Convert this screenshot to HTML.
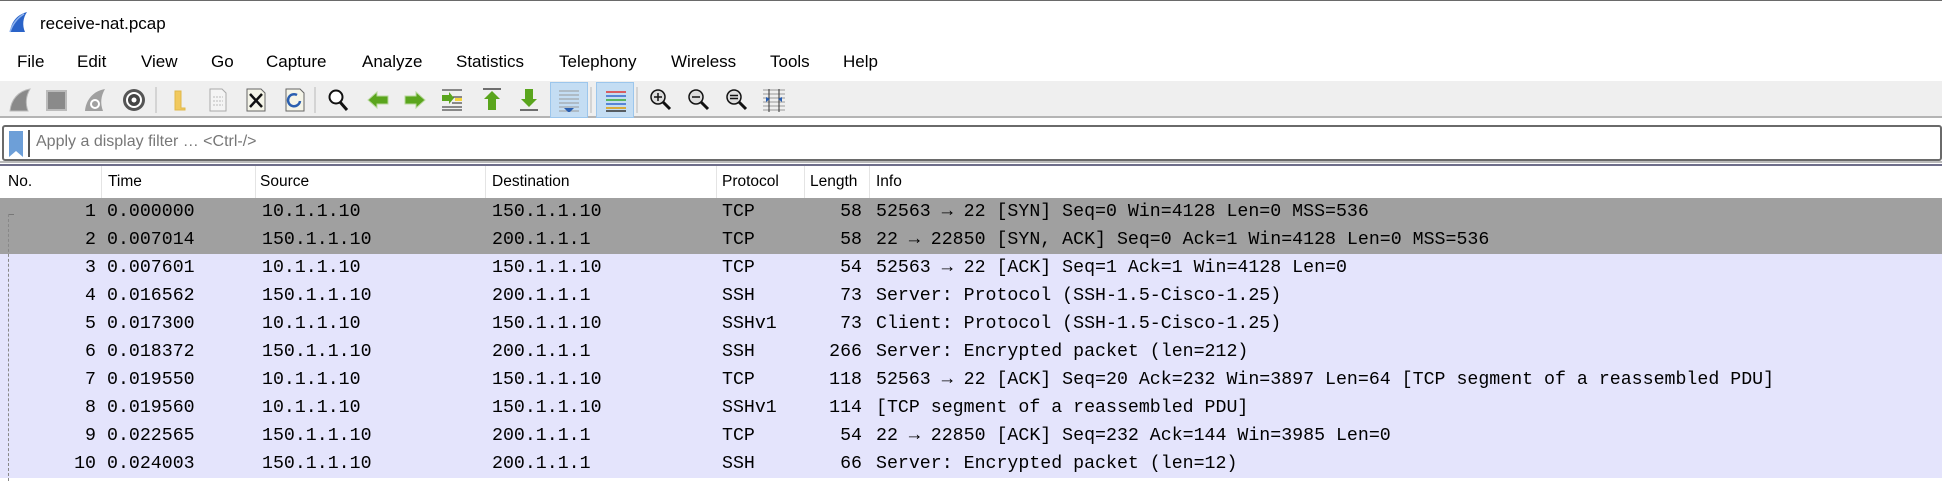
<!DOCTYPE html>
<html><head><meta charset="utf-8"><style>
*{margin:0;padding:0;box-sizing:border-box}
body{width:1942px;height:481px;overflow:hidden;background:#fff;position:relative;font-family:"Liberation Sans",sans-serif;color:#000}
.a{position:absolute}
.menu span{position:absolute;top:52px;font-size:17px}
.tb{position:absolute;top:81px;left:0;width:1942px;height:37px;background:#efefef;border-bottom:2px solid #b4b4b4}
.ic{position:absolute;top:7px;width:24px;height:24px}
.sep{position:absolute;top:6px;width:2px;height:26px;background:#d4d4d4}
.hl{position:absolute;top:1px;height:36px;width:38px;background:#c4ddf3;border:1px solid #9cc6ec}
.row{position:absolute;left:0;width:1942px;height:28px;font-family:"Liberation Mono",monospace;font-size:18.25px;line-height:28px;white-space:pre}
.row span{position:absolute;top:0}
.hd span{position:absolute;top:173px;font-size:15.5px}
.cs{position:absolute;top:166px;width:1px;height:32px;background:#e4e4e4}
</style></head><body>
<div class="a" style="left:0;top:0;width:1942px;height:1px;background:#6a6a6a"></div>
<svg class="a" style="left:8px;top:11px" width="20" height="22" viewBox="0 0 20 22"><path d="M2 21 C3 12 8 4 19 1 C15 7 14 14 17 21 Z" fill="#2a63c8"/><path d="M2 21 C4 14 9 7 16 3" stroke="#8fb3ee" stroke-width="1.5" fill="none"/></svg>
<div class="a" style="left:40px;top:14px;font-size:17px">receive-nat.pcap</div>
<div class="menu">
<span style="left:17px">File</span><span style="left:77px">Edit</span><span style="left:141px">View</span><span style="left:211px">Go</span><span style="left:266px">Capture</span><span style="left:362px">Analyze</span><span style="left:456px">Statistics</span><span style="left:559px">Telephony</span><span style="left:671px">Wireless</span><span style="left:770px">Tools</span><span style="left:843px">Help</span>
</div>
<div class="tb">
<svg class="ic" style="left:8px" viewBox="0 0 24 24"><path d="M2 23 C3 12 10 3 22 1 C18 8 17 15 20 23 Z" fill="#8a8a8a" stroke="#bbb"/></svg>
<div class="ic" style="left:46px;top:9px;width:21px;height:21px;background:#8a8a8a;border:2px solid #bbb"></div>
<svg class="ic" style="left:83px" viewBox="0 0 24 24"><path d="M2 23 C3 12 10 3 22 1 C18 8 17 15 20 23 Z" fill="#a0a0a0"/><circle cx="12" cy="16" r="4" fill="none" stroke="#fff" stroke-width="2"/></svg>
<svg class="ic" style="left:122px" viewBox="0 0 24 24"><circle cx="12" cy="12" r="11" fill="#555"/><circle cx="12" cy="12" r="8" fill="#fff"/><circle cx="12" cy="12" r="6" fill="#444"/><circle cx="12" cy="12" r="2.5" fill="#fff"/></svg>
<div class="sep" style="left:155px"></div>
<svg class="ic" style="left:170px" viewBox="0 0 24 24"><path d="M5 3 H11 V20 H15 V22 H5 Z" fill="#f1c95e" stroke="#e0b84a"/></svg>
<svg class="ic" style="left:206px" viewBox="0 0 24 24"><path d="M4 1 H16 L20 5 V23 H4 Z" fill="#f4f4f4" stroke="#aaa"/><path d="M7 9h10M7 13h10M7 17h10" stroke="#bbb" stroke-dasharray="2 1"/></svg>
<svg class="ic" style="left:244px" viewBox="0 0 24 24"><path d="M3 1 H17 L21 5 V23 H3 Z" fill="#f4f4e8" stroke="#666"/><path d="M6 6 L18 19 M18 6 L6 19" stroke="#111" stroke-width="2.5"/></svg>
<svg class="ic" style="left:283px" viewBox="0 0 24 24"><path d="M3 1 H17 L21 5 V23 H3 Z" fill="#f4f4e8" stroke="#666"/><path d="M14 7 A6 6 0 1 0 17 13" stroke="#2a5fb0" stroke-width="2.5" fill="none"/></svg>
<div class="sep" style="left:314px"></div>
<svg class="ic" style="left:326px" viewBox="0 0 24 24"><circle cx="10" cy="9" r="6.5" fill="#fff" stroke="#111" stroke-width="2"/><path d="M14 14 L21 22" stroke="#111" stroke-width="3"/></svg>
<svg class="ic" style="left:366px" viewBox="0 0 24 24"><path d="M2 12 L11 4 V8 H22 V16 H11 V20 Z" fill="#5aa51d" stroke="#b8d99c"/></svg>
<svg class="ic" style="left:403px" viewBox="0 0 24 24"><path d="M22 12 L13 4 V8 H2 V16 H13 V20 Z" fill="#5aa51d" stroke="#b8d99c"/></svg>
<svg class="ic" style="left:440px" viewBox="0 0 24 24"><path d="M2 2h20M2 19h20M2 22h20M12 9h10M12 15h10" stroke="#222"/><path d="M14 10 L9 4 V7 H2 V13 H9 V16 Z" fill="#5aa51d"/><rect x="15" y="10" width="7" height="3" fill="#f5d53b"/></svg>
<svg class="ic" style="left:480px" viewBox="0 0 24 24"><path d="M3 1h18" stroke="#444" stroke-width="1.5"/><path d="M12 3 L20 11 H16 V22 H8 V11 H4 Z" fill="#5aa51d"/></svg>
<svg class="ic" style="left:517px" viewBox="0 0 24 24"><path d="M3 22h18" stroke="#444" stroke-width="1.5"/><path d="M12 19 L20 11 H16 V1 H8 V11 H4 Z" fill="#5aa51d"/></svg>
<div class="hl" style="left:550px"></div>
<svg class="ic" style="left:557px" viewBox="0 0 24 24"><path d="M2 3h20M2 7h20M2 11h20M2 15h20M2 19h20M2 23h20" stroke="#999"/><path d="M7 20 H17 L12 25 Z" fill="#2a5fb0"/></svg>
<div class="sep" style="left:590px"></div>
<div class="hl" style="left:596px"></div>
<svg class="ic" style="left:604px" viewBox="0 0 24 24"><path d="M2 4h20" stroke="#d33" stroke-width="1.5"/><path d="M2 8h20" stroke="#36c" stroke-width="1.5"/><path d="M2 12h20" stroke="#3a3" stroke-width="1.5"/><path d="M2 16h20" stroke="#36c" stroke-width="1.5"/><path d="M2 20h20" stroke="#d90" stroke-width="1.5"/><path d="M2 23h20" stroke="#333" stroke-width="1.5"/></svg>
<div class="sep" style="left:636px"></div>
<svg class="ic" style="left:648px" viewBox="0 0 24 24"><circle cx="10" cy="9" r="7" fill="#ddd" stroke="#111" stroke-width="1.5"/><path d="M6 9h8M10 5v8" stroke="#111" stroke-width="1.5"/><path d="M15 14 L22 21" stroke="#111" stroke-width="3"/></svg>
<svg class="ic" style="left:686px" viewBox="0 0 24 24"><circle cx="10" cy="9" r="7" fill="#ddd" stroke="#111" stroke-width="1.5"/><path d="M6 9h8" stroke="#111" stroke-width="1.5"/><path d="M15 14 L22 21" stroke="#111" stroke-width="3"/></svg>
<svg class="ic" style="left:724px" viewBox="0 0 24 24"><circle cx="10" cy="9" r="7" fill="#ddd" stroke="#111" stroke-width="1.5"/><path d="M6 7.5h8M6 10.5h8" stroke="#111" stroke-width="1.5"/><path d="M15 14 L22 21" stroke="#111" stroke-width="3"/></svg>
<svg class="ic" style="left:762px" viewBox="0 0 24 24"><path d="M1 2h22M1 6h22M1 10h22M1 14h22M1 18h22M1 22h22" stroke="#999"/><path d="M7 1v23M17 1v23" stroke="#333"/><path d="M4 9 L8 11 L4 14Z M20 9 L16 11 L20 14Z" fill="#2a5fb0"/></svg>
</div>
<div class="a" style="left:2px;top:125px;width:1940px;height:36px;border:2px solid #6a6a6a;border-radius:3px;background:#fff"></div>
<svg class="a" style="left:9px;top:131px" width="14" height="26" viewBox="0 0 14 26"><path d="M0 0H14V26L7 20L0 26Z" fill="#6d9fd8"/></svg>
<div class="a" style="left:28px;top:130px;width:2px;height:27px;background:#555"></div>
<div class="a" style="left:36px;top:133px;font-size:16px;color:#777">Apply a display filter … &lt;Ctrl-/&gt;</div>
<div class="a" style="left:0;top:161px;width:1942px;height:2px;background:#bbb"></div>
<div class="a" style="left:0;top:164px;width:1942px;height:2px;background:#6e6e8a"></div>
<div class="hd">
<span style="left:8px">No.</span><span style="left:108px">Time</span><span style="left:260px">Source</span><span style="left:492px">Destination</span><span style="left:722px">Protocol</span><span style="left:810px">Length</span><span style="left:876px">Info</span>
</div>
<div class="cs" style="left:101px"></div><div class="cs" style="left:255px"></div><div class="cs" style="left:485px"></div><div class="cs" style="left:716px"></div><div class="cs" style="left:804px"></div><div class="cs" style="left:869px"></div>
<div class="row" style="top:198px;background:#a0a0a0"><span style="right:1846px">1</span><span style="left:107px">0.000000</span><span style="left:262px">10.1.1.10</span><span style="left:492px">150.1.1.10</span><span style="left:722px">TCP</span><span style="right:1080px">58</span><span style="left:876px">52563 → 22 [SYN] Seq=0 Win=4128 Len=0 MSS=536</span></div>
<div class="row" style="top:226px;background:#a0a0a0"><span style="right:1846px">2</span><span style="left:107px">0.007014</span><span style="left:262px">150.1.1.10</span><span style="left:492px">200.1.1.1</span><span style="left:722px">TCP</span><span style="right:1080px">58</span><span style="left:876px">22 → 22850 [SYN, ACK] Seq=0 Ack=1 Win=4128 Len=0 MSS=536</span></div>
<div class="row" style="top:254px;background:#e4e4fc"><span style="right:1846px">3</span><span style="left:107px">0.007601</span><span style="left:262px">10.1.1.10</span><span style="left:492px">150.1.1.10</span><span style="left:722px">TCP</span><span style="right:1080px">54</span><span style="left:876px">52563 → 22 [ACK] Seq=1 Ack=1 Win=4128 Len=0</span></div>
<div class="row" style="top:282px;background:#e4e4fc"><span style="right:1846px">4</span><span style="left:107px">0.016562</span><span style="left:262px">150.1.1.10</span><span style="left:492px">200.1.1.1</span><span style="left:722px">SSH</span><span style="right:1080px">73</span><span style="left:876px">Server: Protocol (SSH-1.5-Cisco-1.25)</span></div>
<div class="row" style="top:310px;background:#e4e4fc"><span style="right:1846px">5</span><span style="left:107px">0.017300</span><span style="left:262px">10.1.1.10</span><span style="left:492px">150.1.1.10</span><span style="left:722px">SSHv1</span><span style="right:1080px">73</span><span style="left:876px">Client: Protocol (SSH-1.5-Cisco-1.25)</span></div>
<div class="row" style="top:338px;background:#e4e4fc"><span style="right:1846px">6</span><span style="left:107px">0.018372</span><span style="left:262px">150.1.1.10</span><span style="left:492px">200.1.1.1</span><span style="left:722px">SSH</span><span style="right:1080px">266</span><span style="left:876px">Server: Encrypted packet (len=212)</span></div>
<div class="row" style="top:366px;background:#e4e4fc"><span style="right:1846px">7</span><span style="left:107px">0.019550</span><span style="left:262px">10.1.1.10</span><span style="left:492px">150.1.1.10</span><span style="left:722px">TCP</span><span style="right:1080px">118</span><span style="left:876px">52563 → 22 [ACK] Seq=20 Ack=232 Win=3897 Len=64 [TCP segment of a reassembled PDU]</span></div>
<div class="row" style="top:394px;background:#e4e4fc"><span style="right:1846px">8</span><span style="left:107px">0.019560</span><span style="left:262px">10.1.1.10</span><span style="left:492px">150.1.1.10</span><span style="left:722px">SSHv1</span><span style="right:1080px">114</span><span style="left:876px">[TCP segment of a reassembled PDU]</span></div>
<div class="row" style="top:422px;background:#e4e4fc"><span style="right:1846px">9</span><span style="left:107px">0.022565</span><span style="left:262px">150.1.1.10</span><span style="left:492px">200.1.1.1</span><span style="left:722px">TCP</span><span style="right:1080px">54</span><span style="left:876px">22 → 22850 [ACK] Seq=232 Ack=144 Win=3985 Len=0</span></div>
<div class="row" style="top:450px;background:#e4e4fc"><span style="right:1846px">10</span><span style="left:107px">0.024003</span><span style="left:262px">150.1.1.10</span><span style="left:492px">200.1.1.1</span><span style="left:722px">SSH</span><span style="right:1080px">66</span><span style="left:876px">Server: Encrypted packet (len=12)</span></div>
<div class="a" style="left:8px;top:214px;width:6px;height:1px;background:#777"></div>
<div class="a" style="left:8px;top:214px;width:1px;height:267px;border-left:1px dashed #888"></div>
</body></html>
